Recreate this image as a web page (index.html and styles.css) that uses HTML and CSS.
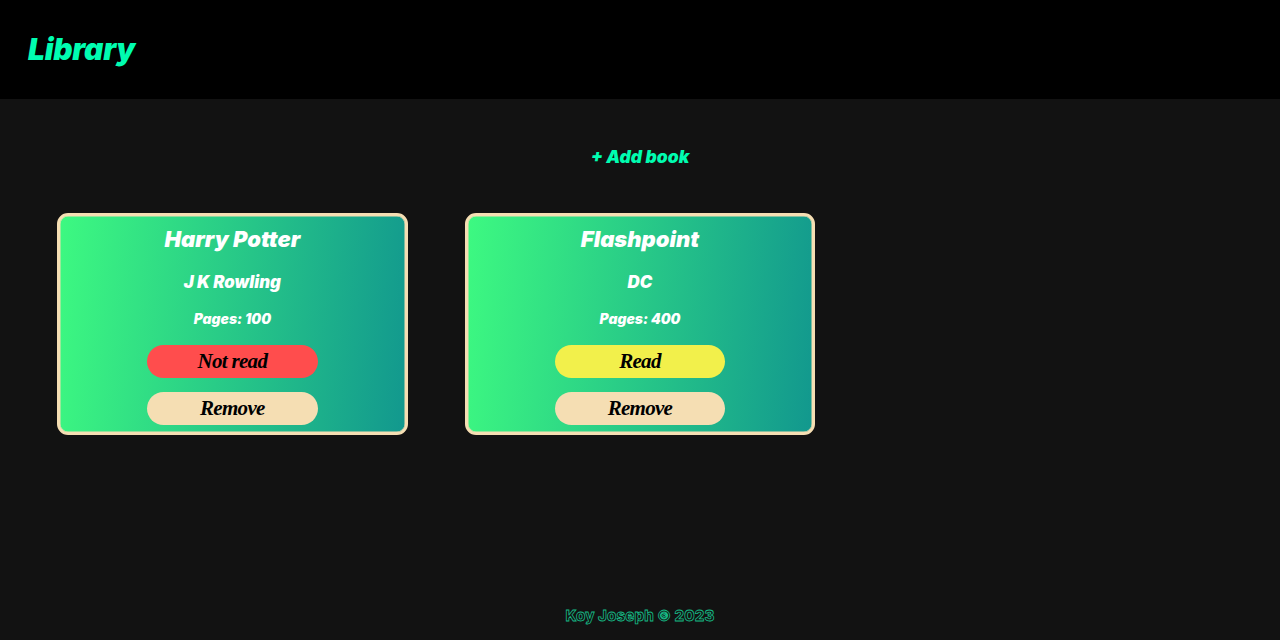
FILE: index.html
```html
<!DOCTYPE html>
<html lang="en">
<head>
<meta charset="utf-8">
<title>Library</title>
<link rel="stylesheet" href="styles.css">
</head>
<body>
<header class="top"><h1 class="logo">Library</h1></header>
<main class="main">
  <div class="add-row"><button class="add">+ Add book</button></div>
  <section class="books">
    <article class="card">
      <h2 class="title">Harry Potter</h2>
      <p class="author">J K Rowling</p>
      <p class="pages">Pages: 100</p>
      <button class="pill not-read">Not read</button>
      <button class="pill remove">Remove</button>
    </article>
    <article class="card">
      <h2 class="title">Flashpoint</h2>
      <p class="author">DC</p>
      <p class="pages">Pages: 400</p>
      <button class="pill read">Read</button>
      <button class="pill remove">Remove</button>
    </article>
  </section>
</main>
<footer class="foot">Koy Joseph © 2023</footer>
</body>
</html>
```
FILE: styles.css
```css
* { box-sizing: border-box; }
html, body { margin: 0; height: 100%; }
body {
  height: 640px;
  overflow: hidden;
  display: flex;
  flex-direction: column;
  background: #121212;
  font-family: "Inter", "Noto Sans", sans-serif;
}
.top {
  flex: 0 0 99px;
  display: flex;
  align-items: center;
  padding-left: 28px;
  padding-bottom: 2px;
  background: #000;
}
.logo {
  margin: 0;
  font-size: 30px;
  font-weight: 900;
  font-style: italic;
  color: #00fdb0;
  letter-spacing: -0.3px;
}
.main { flex: 1; padding: 46px 57.2px 0; }
.add-row { display: flex; justify-content: center; height: 68px; }
.add {
  height: 22px;
  padding: 0;
  border: 0;
  background: none;
  font: italic 900 17.5px "Inter", sans-serif;
  color: #00fdb0;
}
.books { display: grid; grid-template-columns: repeat(3, 350.4px); column-gap: 57.2px; }
.card {
  height: 222px;
  padding-top: 8px;
  display: flex;
  flex-direction: column;
  align-items: center;
  border: 3px solid #f5deb3;
  border-radius: 11px;
  box-shadow: inset 0 0 0 0.5px #f5deb3;
  background: linear-gradient(95deg, #3df981, #12988e);
  color: #fff;
  font-style: italic;
  text-align: center;
}
.title { margin: 0; height: 30px; font-size: 22px; line-height: 30px; font-weight: 900; }
.author { margin: 16px 0 0; height: 24px; font-size: 16.8px; line-height: 24px; font-weight: 900; }
.pages { margin: 15px 0 0; height: 22px; font-size: 13.9px; line-height: 21px; font-weight: 900; }
.pill {
  width: 170.6px;
  height: 33px;
  margin-top: 14px;
  padding: 0;
  border: 0;
  border-radius: 17px;
  font: italic 700 21px "Liberation Serif", serif;
  letter-spacing: -0.7px;
  color: #000;
}
.pill.remove { background: #f5deb3; }
.pill.not-read { background: #ff4d4d; }
.pill.read { background: #f2f04b; }
.foot {
  flex: 0 0 48px;
  text-align: center;
  padding-top: 14px;
  font: 800 15px "Inter", sans-serif;
  letter-spacing: 0.15px;
  color: #121212;
  -webkit-text-stroke: 0.8px #16b885;
}
```
